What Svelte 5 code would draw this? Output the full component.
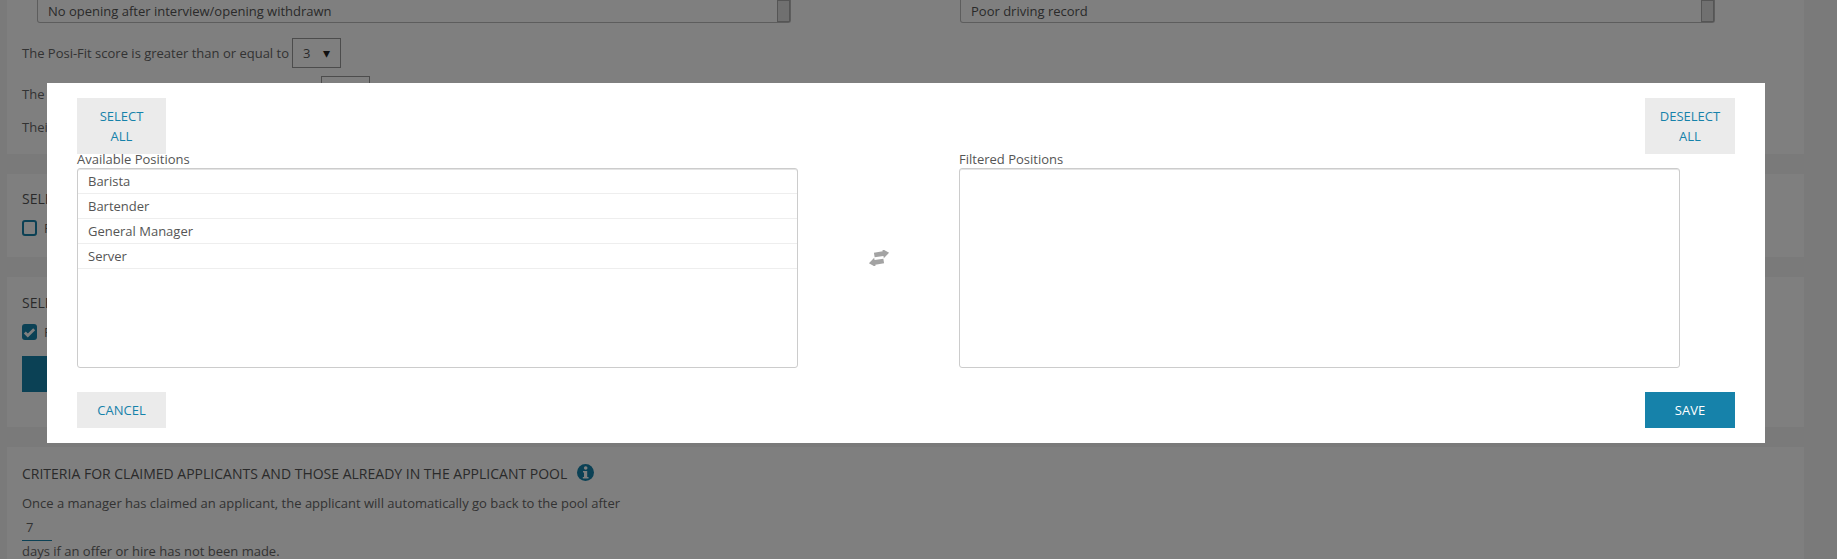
<script lang="ts">
  const available = ['Barista', 'Bartender', 'General Manager', 'Server'];
</script>

<div class="page">
  <section class="panel first">
    <div class="reasons">
      <div class="reason-list"><span>No opening after interview/opening withdrawn</span><i class="thumb"></i></div>
      <div class="reason-list right"><span>Poor driving record</span><i class="thumb"></i></div>
    </div>
    <p class="rule">The Posi-Fit score is greater than or equal to <span class="select">3<b>▾</b></span></p>
    <p class="rule">The applicant's availability is greater or equal to <span class="select">3<b>▾</b></span></p>
    <p class="rule">Their desired pay is within the range</p>
  </section>

  <section class="panel second">
    <h3>SELECT POSITIONS</h3>
    <label class="check"><span class="box"></span>Filter by position</label>
  </section>

  <section class="panel third">
    <h3>SELECT LOCATIONS</h3>
    <label class="check"><span class="box on">
      <svg viewBox="0 0 16 16" width="15" height="16"><path d="M3 8.500l3.200 3.200L13 5" fill="none" stroke="#fff" stroke-width="3"/></svg>
    </span>Filter by location</label>
    <button class="dark">EDIT</button>
  </section>

  <section class="panel fourth">
    <h3 class="with-icon">CRITERIA FOR CLAIMED APPLICANTS AND THOSE ALREADY IN THE APPLICANT POOL
      <svg class="info" viewBox="0 0 17 17" width="17" height="17">
        <circle cx="8.500" cy="8.500" r="8.500" fill="#1682aa"/>
        <circle cx="8.700" cy="4" r="1.800" fill="#fff"/>
        <path d="M6 7h4.200v6H11.500v1.600H5.800V13H7V8.600H6z" fill="#fff"/>
      </svg>
    </h3>
    <p class="text">Once a manager has claimed an applicant, the applicant will automatically go back to the pool after</p>
    <div class="days">7</div>
    <p class="text">days if an offer or hire has not been made.</p>
  </section>
</div>

<div class="overlay"></div>

<div class="modal">
  <div class="top-row">
    <button class="btn wrap">SELECT ALL</button>
    <button class="btn wrap narrow">DESELECT ALL</button>
  </div>
  <div class="columns">
    <div>
      <div class="col-label">Available Positions</div>
      <ul class="list">
        {#each available as name}
          <li>{name}</li>
        {/each}
      </ul>
    </div>
    <div class="swap">
      <svg viewBox="0 0 21 15" width="22" height="16">
        <g fill="#a3a3a3" transform="rotate(-9 10.500 7.500)">
          <path d="M6.500 1.800h8.500V-.5L20.800 4 15 8.500V6.200H6.500z"/>
          <path d="M14.500 8.800H6V6.500L.2 11 6 15.500v-2.300h8.500z"/>
        </g>
      </svg>
    </div>
    <div>
      <div class="col-label">Filtered Positions</div>
      <ul class="list"></ul>
    </div>
  </div>
  <div class="footer">
    <button class="btn left">CANCEL</button>
    <button class="btn save">SAVE</button>
  </div>
</div>

<style>
  :global(body) {
    margin: 0;
    background: #f5f5f5;
    font-family: "Open Sans", sans-serif;
    font-size: 13px;
    color: #666;
    overflow: hidden;
  }
  .page { height: 559px; overflow: hidden; padding: 0 33px 0 7px; }
  .panel { background: #fff; padding: 0 15px; margin-bottom: 20px; }
  .first { height: 154px; }
  .second { height: 83px; }
  .third { height: 150px; }
  .fourth { height: 200px; margin-bottom: 0; }
  h3 { margin: 0; font-size: 14px; font-weight: 400; line-height: 20px; padding-top: 17px; color: #555; }
  .second h3 { padding-top: 15px; }
  .third h3 { padding-top: 16px; }

  .reasons { display: flex; height: 23px; padding-left: 15px; }
  .reason-list {
    box-sizing: border-box;
    width: 754px;
    height: 23px;
    border: 1px solid #bbb;
    border-top: 0;
    border-radius: 0 0 3px 3px;
    position: relative;
    line-height: 23px;
    padding-left: 10px;
    color: #555;
  }
  .reason-list.right { margin-left: 169px; width: 755px; }
  .thumb {
    position: absolute;
    right: 0;
    bottom: 0;
    width: 13px;
    height: 22px;
    background: #e0e0e0;
    border: 1px solid #aaa;
    box-sizing: border-box;
  }
  .rule { margin: 0; height: 32px; line-height: 32px; display: flex; gap: 3px; align-items: center; }
  .rule:nth-of-type(1) { margin-top: 15px; height: 30px; }
  .rule:nth-of-type(2) { margin-top: 10px; }
  .rule:nth-of-type(2) .select { margin: -6px 0 0 9px; }
  .rule:nth-of-type(3) { margin-top: 1px; }
  .select {
    box-sizing: border-box;
    width: 49px;
    height: 30px;
    border: 1px solid #999;
    padding: 0 10px;
    display: flex;
    justify-content: space-between;
    align-items: center;
    color: #555;
  }
  .select b { font-size: 14px; color: #222; font-weight: 400; }

  .check { display: flex; align-items: center; gap: 7px; margin-top: 11px; height: 16px; }
  .box {
    box-sizing: border-box;
    width: 15px;
    height: 16px;
    border: 2px solid #1682aa;
    border-radius: 3px;
    display: flex;
    background: #fff;
  }
  .box.on { background: #1682aa; border: 0; }
  .dark {
    display: block;
    margin-top: 16px;
    width: 120px;
    height: 36px;
    border: 0;
    background: #1682aa;
    color: #fff;
    font: inherit;
  }

  .with-icon { display: flex; align-items: center; gap: 10px; }
  .info { margin-top: -4px; }
  .text { margin: 0; line-height: 20px; }
  .fourth .text:first-of-type { margin-top: 9px; }
  .days {
    box-sizing: border-box;
    width: 30px;
    height: 26px;
    line-height: 24px;
    padding-left: 4px;
    border-bottom: 1px solid #1682aa;
    margin-top: 2px;
  }

  .overlay { position: fixed; inset: 0; background: rgba(0, 0, 0, 0.5); }
  .modal {
    position: fixed;
    left: 47px;
    top: 83px;
    box-sizing: border-box;
    width: 1718px;
    height: 360px;
    padding: 15px 30px;
    background: #fff;
    display: flex;
    flex-direction: column;
    color: #555;
  }
  .top-row { display: flex; justify-content: space-between; }
  .btn {
    box-sizing: border-box;
    width: 90px;
    height: 36px;
    padding: 0 10px;
    border: 0;
    background: #ebebeb;
    color: #1682aa;
    font: inherit;
    font-size: 13px;
    line-height: 20px;
  }
  .btn.left { width: 89px; }
  .btn.wrap { width: 89px; height: 56px; padding: 8px 20px; }
  .btn.wrap.narrow { width: 90px; padding: 8px 10px; }
  .btn.save { background: #1682aa; color: #fff; }
  .columns { display: grid; grid-template-columns: 721px 161px 721px; margin-top: -3px; }
  .col-label { height: 17px; line-height: 16px; }
  .list {
    box-sizing: border-box;
    height: 200px;
    margin: 0;
    padding: 0;
    list-style: none;
    border: 1px solid #ccc;
    border-radius: 3px;
    box-shadow: inset 0 1px 0 #e4e4e4;
  }
  .list li { height: 25px; box-sizing: border-box; line-height: 24px; padding-left: 10px; border-bottom: 1px solid #eee; }
  .swap { display: flex; justify-content: center; align-items: center; padding-bottom: 3px; }
  .footer { display: flex; justify-content: space-between; margin-top: 24px; }
</style>
